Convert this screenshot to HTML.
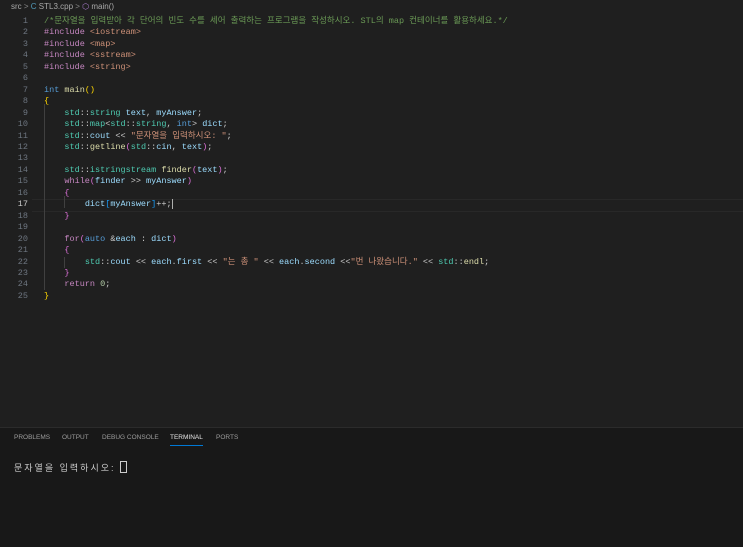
<!DOCTYPE html>
<html><head><meta charset="utf-8">
<style>
html,body{margin:0;padding:0;}
body{width:743px;height:546px;background:#1f1f1f;overflow:hidden;position:relative;font-family:"Liberation Mono","Noto Sans CJK KR",monospace;}
.bc{position:absolute;left:11px;top:2px;font:8px "Liberation Sans","Noto Sans CJK KR",sans-serif;color:#a9a9a9;white-space:pre;}
.ln{position:absolute;left:0;width:28px;text-align:right;font-size:8.5px;color:#6e7681;line-height:11.46px;}
.code{position:absolute;left:44px;font-size:8.5px;line-height:11.46px;color:#cccccc;}
.l{height:11.46px;white-space:pre;}
.c{color:#6a9955}.p{color:#c586c0}.s{color:#ce9178}.t{color:#4ec9b0}.v{color:#9cdcfe}.k{color:#569cd6}.f{color:#dcdcaa}.n{color:#b5cea8}.y{color:#ffd700}.m{color:#da70d6}.g{color:#179fff}
.cur{position:absolute;left:32px;width:711px;top:199px;height:11px;border-top:1px solid #282828;border-bottom:1px solid #282828;}
.guide{position:absolute;width:1px;background:#404040;}
.panel{position:absolute;left:0;top:427px;width:743px;height:119px;background:#181818;border-top:1px solid #2b2b2b;}
.tabs{position:absolute;top:6px;left:14px;font:6.5px "Liberation Sans",sans-serif;color:#9d9d9d;}
.tabs span{position:absolute;white-space:nowrap;}
.term{position:absolute;left:14px;top:33px;font:9px "Liberation Sans","Noto Sans CJK KR",sans-serif;color:#cccccc;letter-spacing:2px;white-space:pre;}
</style></head><body>
<div class="bc">src <span style="color:#888">&gt;</span> <span style="color:#519aba">C</span> STL3.cpp <span style="color:#888">&gt;</span> <span style="color:#b180d7">⬡</span> main()</div>
<div class="cur"></div>
<div class="guide" style="left:44px;top:104px;height:186px"></div>
<div class="guide" style="left:64px;top:196px;height:12px"></div>
<div class="guide" style="left:64px;top:257px;height:11px"></div>
<div class="ln" style="top:16px">1<br>2<br>3<br>4<br>5<br>6<br>7<br>8<br>9<br>10<br>11<br>12<br>13<br>14<br>15<br>16<br><span style="color:#ccc">17</span><br>18<br>19<br>20<br>21<br>22<br>23<br>24<br>25</div>
<div class="code" style="top:16px"><div class="l c">/*문자열을 입력받아 각 단어의 빈도 수를 세어 출력하는 프로그램을 작성하시오. STL의 map 컨테이너를 활용하세요.*/</div><div class="l"><span class="p">#include</span> <span class="s">&lt;iostream&gt;</span></div><div class="l"><span class="p">#include</span> <span class="s">&lt;map&gt;</span></div><div class="l"><span class="p">#include</span> <span class="s">&lt;sstream&gt;</span></div><div class="l"><span class="p">#include</span> <span class="s">&lt;string&gt;</span></div><div class="l"> </div><div class="l"><span class="k">int</span> <span class="f">main</span><span class="y">()</span></div><div class="l"><span class="y">{</span></div><div class="l">    <span class="t">std</span>::<span class="t">string</span> <span class="v">text</span>, <span class="v">myAnswer</span>;</div><div class="l">    <span class="t">std</span>::<span class="t">map</span>&lt;<span class="t">std</span>::<span class="t">string</span>, <span class="k">int</span>&gt; <span class="v">dict</span>;</div><div class="l">    <span class="t">std</span>::<span class="v">cout</span> &lt;&lt; <span class="s">"문자열을 입력하시오: "</span>;</div><div class="l">    <span class="t">std</span>::<span class="f">getline</span><span class="m">(</span><span class="t">std</span>::<span class="v">cin</span>, <span class="v">text</span><span class="m">)</span>;</div><div class="l"> </div><div class="l">    <span class="t">std</span>::<span class="t">istringstream</span> <span class="f">finder</span><span class="m">(</span><span class="v">text</span><span class="m">)</span>;</div><div class="l">    <span class="p">while</span><span class="m">(</span><span class="v">finder</span> &gt;&gt; <span class="v">myAnswer</span><span class="m">)</span></div><div class="l">    <span class="m">{</span></div><div class="l">        <span class="v">dict</span><span class="g">[</span><span class="v">myAnswer</span><span class="g">]</span>++;<span style="border-left:1px solid #aeafad"></span></div><div class="l">    <span class="m">}</span></div><div class="l"> </div><div class="l">    <span class="p">for</span><span class="m">(</span><span class="k">auto</span> &amp;<span class="v">each</span> : <span class="v">dict</span><span class="m">)</span></div><div class="l">    <span class="m">{</span></div><div class="l">        <span class="t">std</span>::<span class="v">cout</span> &lt;&lt; <span class="v">each</span>.<span class="v">first</span> &lt;&lt; <span class="s">"는 총 "</span> &lt;&lt; <span class="v">each</span>.<span class="v">second</span> &lt;&lt;<span class="s">"번 나왔습니다."</span> &lt;&lt; <span class="t">std</span>::<span class="f">endl</span>;</div><div class="l">    <span class="m">}</span></div><div class="l">    <span class="p">return</span> <span class="n">0</span>;</div><div class="l"><span class="y">}</span></div></div>
<div class="panel">
<div class="tabs">
<span style="left:0">PROBLEMS</span>
<span style="left:48px">OUTPUT</span>
<span style="left:88px">DEBUG CONSOLE</span>
<span style="left:156px;color:#e7e7e7">TERMINAL<div style="height:1px;background:#0078d4;margin-top:4px"></div></span>
<span style="left:202px">PORTS</span>
</div>
<div class="term">문자열을 입력하시오: <span style="display:inline-block;width:5px;height:10px;border:1px solid #ccc;vertical-align:-2px"></span></div>
</div>
</body></html>
